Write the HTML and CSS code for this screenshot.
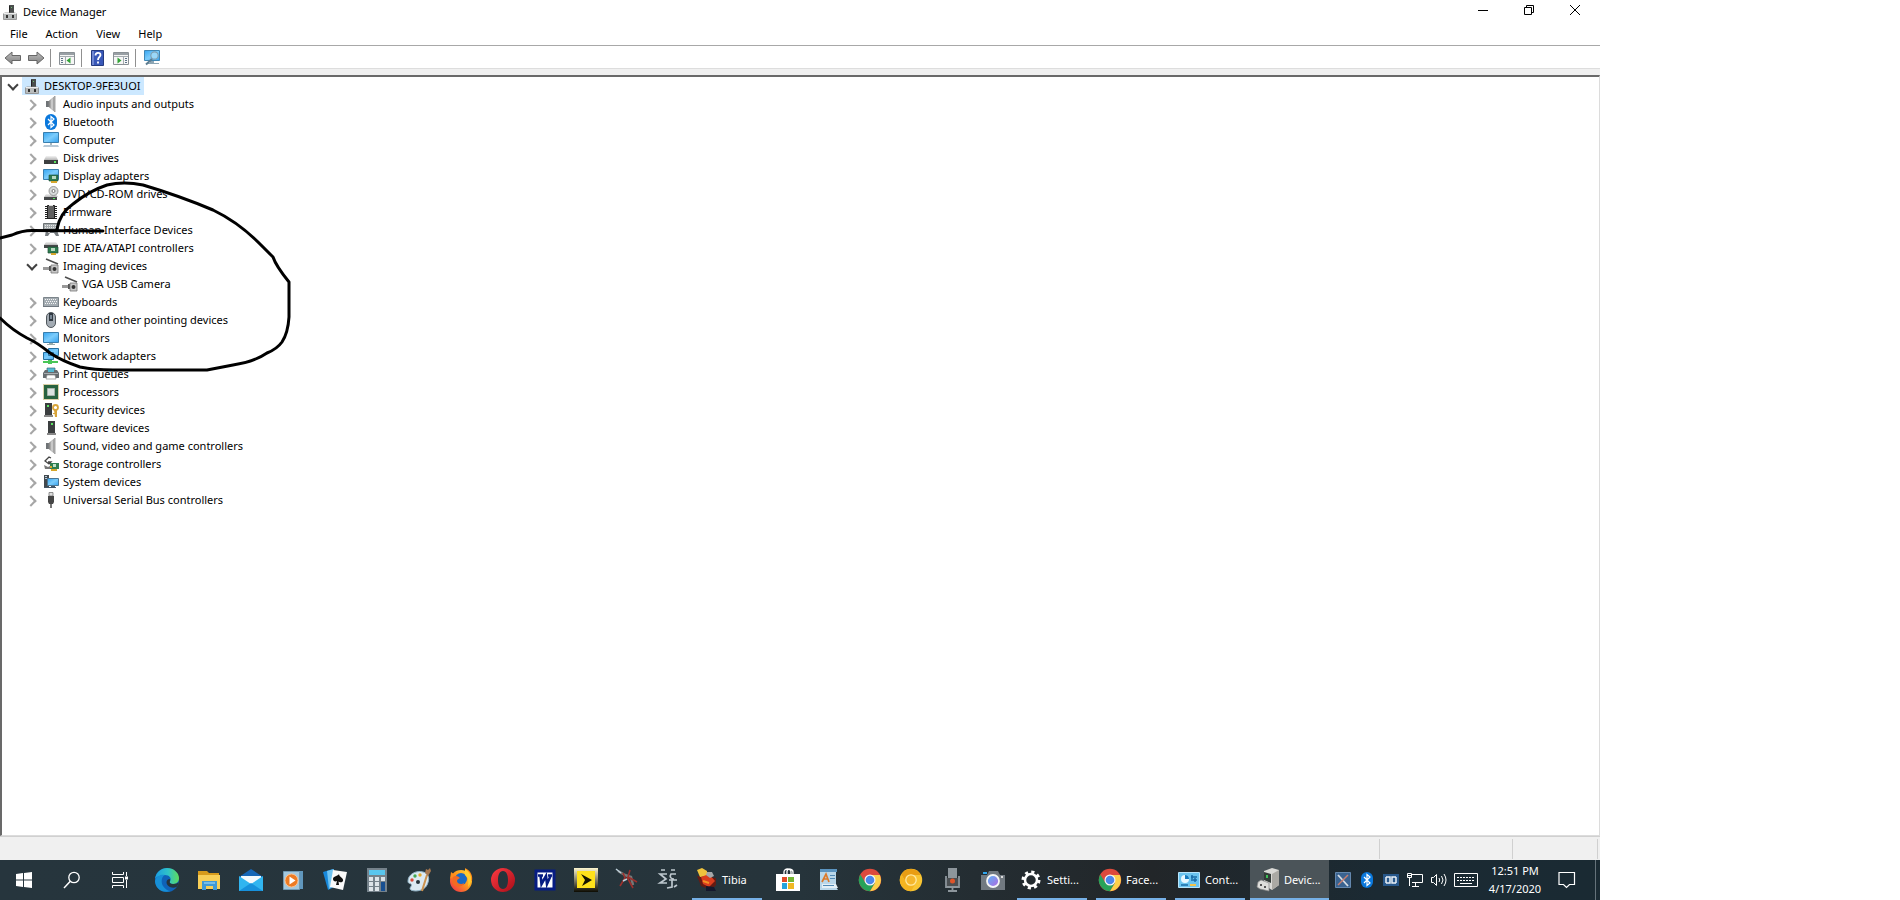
FILE: index.html
```html
<!DOCTYPE html>
<html lang="en">
<head>
<meta charset="utf-8">
<title>Device Manager</title>
<link rel="stylesheet" href="styles.css">
</head>
<body>
<svg class="sprite" aria-hidden="true">
  <defs>
    <linearGradient id="g-screen" x1="0" y1="0" x2="1" y2="1"><stop offset="0" stop-color="#35a5f2"/><stop offset=".5" stop-color="#7cccfb"/><stop offset="1" stop-color="#35a0ee"/></linearGradient>
    <linearGradient id="g-metal" x1="0" x2="1"><stop offset="0" stop-color="#777"/><stop offset=".6" stop-color="#d8d8d8"/><stop offset="1" stop-color="#999"/></linearGradient>
    <linearGradient id="g-disk" x1="0" y1="0" x2="0" y2="1"><stop offset="0" stop-color="#f2f2f2"/><stop offset="1" stop-color="#b5b5b5"/></linearGradient>
    <linearGradient id="g-arrow" x1="0" y1="0" x2="0" y2="1"><stop offset="0" stop-color="#bdbdbd"/><stop offset="1" stop-color="#808080"/></linearGradient>
    <linearGradient id="g-edge" x1="0" y1="0" x2="1" y2="0"><stop offset="0" stop-color="#1b9de2"/><stop offset=".55" stop-color="#2fc3c8"/><stop offset="1" stop-color="#5fdc5a"/></linearGradient>
    <linearGradient id="g-fox" x1="1" y1="0" x2="0" y2="1"><stop offset="0" stop-color="#ffe13a"/><stop offset=".45" stop-color="#ff9a1c"/><stop offset="1" stop-color="#f0244c"/></linearGradient>
    <linearGradient id="g-opera" x1="0" y1="0" x2="1" y2="1"><stop offset="0" stop-color="#ff3b43"/><stop offset="1" stop-color="#a80d18"/></linearGradient>
    <linearGradient id="g-lens" x1="0" y1="0" x2="1" y2="1"><stop offset="0" stop-color="#58b8f5"/><stop offset="1" stop-color="#b564e0"/></linearGradient>
    <linearGradient id="g-gold" x1="0" y1="0" x2="0" y2="1"><stop offset="0" stop-color="#fdf6cf"/><stop offset="1" stop-color="#0c0b02"/></linearGradient>
  </defs>
  <symbol id="pc" viewBox="0 0 14 16"><path fill="#4a4d4d" d="M6 1h5v9H6z"/><path fill="#222" d="M6 2h1v7H6z"/><path fill="#6fbf72" d="M8 3h1v1H8z"/><path fill="#b9bcbc" stroke="#888" stroke-width=".8" d="M1.500 9h11l1 1v5.500H.5V10z"/><path fill="#eee" d="M1 9h12v1H1z"/><path fill="#333" d="M3 11h2v3H3zM9 11h2v3H9z"/></symbol>
  <symbol id="speaker" viewBox="0 0 16 16"><path fill="#6f7376" d="M3 5h3v6H3z"/><path fill="url(#g-metal)" stroke="#999" stroke-width=".5" d="M6 5l5-4v14l-5-4z"/><path fill="#a5a5a5" d="M11 0h1.500v16H11z"/></symbol>
  <symbol id="bt" viewBox="0 0 16 16"><rect x="2" width="12" height="16" rx="6" fill="#0a78dc"/><path fill="none" stroke="#fff" stroke-width="1.200" d="M5 5l6 6-3 2.500v-11L11 5l-6 6"/></symbol>
  <symbol id="monitor" viewBox="0 0 16 16"><path fill="url(#g-screen)" stroke="#3a7fae" d="M.5 2.500h15v10H.5z"/><path fill="#9aa" d="M6 13h4v1H6zM4 14h8v1H4z"/></symbol>
  <symbol id="computer" viewBox="0 0 16 16"><path fill="url(#g-screen)" stroke="#3a7fae" d="M.5.5h15v10H.5z"/><path fill="#a9b6bd" d="M7 11h2v2H7z"/><path fill="#b8c9d6" d="M1 13h14l1 2H0z"/></symbol>
  <symbol id="disk" viewBox="0 0 16 16"><path fill="url(#g-disk)" d="M3 6h10l2 4H1z"/><path fill="#3c3f40" d="M1 10h14v4H1z"/><path fill="#59e35e" d="M11 11h2v2h-2z"/></symbol>
  <symbol id="display" viewBox="0 0 16 16"><path fill="url(#g-screen)" stroke="#3a7fae" d="M.5 1.500h15v10H.5z"/><path fill="#2e7a50" stroke="#1d4f35" stroke-width=".6" d="M6 7h9v6H6z"/><path fill="#b8d8c0" d="M9 8h4v3H9z"/><path fill="#d5a62c" d="M8 13h6v2H8z"/></symbol>
  <symbol id="dvd" viewBox="0 0 16 16"><path fill="url(#g-disk)" d="M3 8h10l2 3H1z"/><circle cx="10.500" cy="5" r="4.500" fill="#d6d9da" stroke="#858585" stroke-width=".8"/><circle cx="10.500" cy="5" r="1.500" fill="#fff" stroke="#777"/><path fill="#454849" d="M1 11h13v3H1z"/><path fill="#59e35e" d="M10 12h2v1h-2z"/></symbol>
  <symbol id="chip" viewBox="0 0 16 16"><path stroke="#222" d="M2 2.500h12M2 4.500h12M2 6.500h12M2 8.500h12M2 10.500h12M2 12.500h12M2 14.500h12"/><path fill="#606060" stroke="#222" d="M4.500 1.500h7v13h-7z"/><path fill="#ddd" d="M6 1h4v1H6z"/></symbol>
  <symbol id="hid" viewBox="0 0 16 16"><path fill="#a5abad" stroke="#6d7375" d="M.5 1.500h15v6H.5z"/><path stroke="#e8e8e8" stroke-dasharray="1 1" d="M2 3.500h12M2 5.500h12"/><path fill="#777c80" d="M3 8h11l2 6h-3l-2-3H7l-2 3H2z"/><path fill="#ddd" d="M5 9h2v2H5zM11 9h1v1h-1z"/></symbol>
  <symbol id="ide" viewBox="0 0 16 16"><path fill="url(#g-disk)" d="M3 2h10l2 3H1z"/><path fill="#454849" d="M1 5h14v3H1z"/><path fill="#2f7e50" stroke="#1d4f35" stroke-width=".7" d="M5 7h10v6H5z"/><path fill="#b8d8c0" d="M8 8h4v3H8z"/><path fill="#d5a62c" d="M8 13h5v2H8z"/></symbol>
  <symbol id="camera" viewBox="0 0 16 16"><path fill="none" stroke="#4d4d4d" stroke-width="1.500" d="M3 1l12 5"/><path fill="#999" d="M0 9h6v3H0z"/><path fill="#555" d="M6 8h2v5H6z"/><path fill="#c8c8c8" stroke="#777" stroke-width=".8" d="M8 7h7v8H8z"/><circle cx="11.500" cy="11" r="2" fill="#333"/></symbol>
  <symbol id="keyboard" viewBox="0 0 16 16"><path fill="#a3abb1" stroke="#7c858b" d="M.5 3.500h15v9H.5z"/><path stroke="#f5f5f5" stroke-dasharray="1 1" d="M2 5.500h12M3 7.500h11M2 9.500h12"/><path fill="#707880" d="M0 12h16v1H0z"/></symbol>
  <symbol id="mouse" viewBox="0 0 16 16"><rect x="3.500" y=".5" width="9" height="15" rx="4.500" fill="#a3abb3" stroke="#50575c"/><path fill="#303941" d="M6 1h4v8H6z"/><path fill="#bdd4e8" d="M7.500 3h1v4h-1z"/></symbol>
  <symbol id="network" viewBox="0 0 16 16"><path fill="url(#g-screen)" stroke="#27709f" d="M5.500.5h10v7h-10zM.5 4.500h10v7H.5z"/><path fill="#49c657" d="M0 13h15v2H0zM5 12h4v4H5z"/></symbol>
  <symbol id="printer" viewBox="0 0 16 16"><path fill="#53b9d3" stroke="#3c6a7a" stroke-width=".7" d="M4 2h8v4H4z"/><path fill="#666c70" d="M2 4h12l2 3v5H0V7z"/><path fill="#a8adb0" d="M1 7h14v1H1z"/><path fill="#53b9d3" d="M5 3h6v3H5z"/><path fill="#fff" stroke="#888" stroke-width=".7" d="M4 9h8l1 4H3z"/></symbol>
  <symbol id="cpu" viewBox="0 0 16 16"><path fill="#29633f" d="M1 1h14v14H1z"/><path fill="none" stroke="#b7a24e" stroke-dasharray="1 1" d="M.5.5h15v15H.5z"/><path fill="#dce3df" stroke="#a6b4ab" d="M4.500 4.500h7v7h-7z"/></symbol>
  <symbol id="security" viewBox="0 0 16 16"><path fill="#3b3e3f" d="M2 1h7v12H2z"/><path fill="#888" d="M1 13h9v2H1z"/><path fill="#5ee562" d="M4 3h2v2H4z"/><circle cx="12.500" cy="5.500" r="2.500" fill="none" stroke="#d9a53a" stroke-width="1.800"/><path fill="#d9a53a" d="M11 8h3v7h-2zM10 11h2v1h-2z"/></symbol>
  <symbol id="software" viewBox="0 0 16 16"><path fill="#3b3e3f" d="M5 1h7v12H5z"/><path fill="#888" d="M4 13h9v2H4z"/><path fill="#5ee562" d="M8 3h2v2H8z"/></symbol>
  <symbol id="storage" viewBox="0 0 16 16"><path fill="none" stroke="#444" stroke-width="1.300" d="M8 2L6 1 2 5l4 3 2-2H5"/><path fill="#777" d="M1 9l4 2 2-1v3H2z"/><path fill="#2f7e50" d="M7 7h9v6H7z"/><path fill="#bfe0c9" d="M10 8h3v3h-3z"/><path fill="#d5a62c" d="M8 13h6v2H8zM7 10h2v2H7z"/></symbol>
  <symbol id="system" viewBox="0 0 16 16"><path fill="#42494e" d="M1 1h5v12H1z"/><path fill="#bcd" d="M2 2h2v1H2zM2 4h2v1H2z"/><path fill="url(#g-screen)" stroke="#4a7694" d="M4.500 4.500h11v7h-11z"/><path fill="#456" d="M8 12h4v1H8zM1 13h12v1H1z"/></symbol>
  <symbol id="usb" viewBox="0 0 16 16"><path fill="#ddd" stroke="#777" stroke-width=".8" d="M6 .5h4V4H6z"/><path fill="#454545" d="M5 4h6v6l-1 2H6l-1-2z"/><path fill="#777" d="M7 12h2v4H7z"/></symbol>
  <symbol id="chrome" viewBox="0 0 24 24"><circle cx="12" cy="12" r="11.200" fill="#dc4a3c"/><path fill="#27a25a" d="M2.300 6.400A11.200 11.200 0 0012 23.200l5-8.500-9.800-.3z"/><path fill="#fcd04a" d="M12 23.200A11.200 11.200 0 0021.800 7H12l5 8z"/><circle cx="12" cy="12" r="5.500" fill="#f5f5f5"/><circle cx="12" cy="12" r="4.300" fill="#4a86ea"/></symbol>
</svg>

<div class="desktop">
  <main class="window">
    <header class="titlebar">
      <svg class="app-icon"><use href="#pc"/></svg>
      <h1 class="title">Device Manager</h1>
      <div class="caption">
        <button class="caption-button" aria-label="Minimize"><svg width="12" height="12"><path d="M1 6.500h10"/></svg></button>
        <button class="caption-button" aria-label="Restore"><svg width="12" height="12"><path d="M1.500 3.500h7v7h-7zM3.500 3V1.500h7v7H9"/></svg></button>
        <button class="caption-button" aria-label="Close"><svg width="12" height="12"><path d="M1 1l10 10M11 1L1 11"/></svg></button>
      </div>
    </header>
    <nav class="menubar">
      <button class="menu">File</button><button class="menu">Action</button><button class="menu">View</button><button class="menu">Help</button>
    </nav>
    <div class="toolbar">
      <button class="tool" aria-label="Back"><svg viewBox="0 0 18 16"><path fill="url(#g-arrow)" stroke="#666" d="M1 8l7-6v3.500h8.500v5H8V14z"/></svg></button>
      <button class="tool" aria-label="Forward"><svg viewBox="0 0 18 16"><path fill="url(#g-arrow)" stroke="#666" d="M17 8l-7-6v3.500H1.500v5H10V14z"/></svg></button>
      <span class="divider"></span>
      <button class="tool" aria-label="Show console tree"><svg viewBox="0 0 18 16"><path fill="#f6f6f6" stroke="#8a9095" d="M1.500 2.500h15v12h-15z"/><path fill="#99a0a5" d="M2 3h14v2H2z"/><path stroke="#a5abb0" d="M2 6.500h14M7.500 7v7"/><path stroke="#5c7387" stroke-dasharray="2 1" d="M3 8.500h3M3 10.500h3M3 12.500h3"/><path fill="#32a336" d="M12.500 7.500v6l-4-3z"/></svg></button>
      <span class="divider"></span>
      <button class="tool" aria-label="Help"><svg viewBox="0 0 18 16"><path fill="#3857b8" stroke="#243a80" d="M2.500.5h12v15h-12z"/><path fill="#6f87d2" d="M3 1h2v14H3z"/><path fill="none" stroke="#fff" stroke-width="1.800" d="M6.500 5.500C6.500 2 11.500 2 11.500 5c0 2-2.500 2-2.500 5M9 11.500v2"/></svg></button>
      <button class="tool" aria-label="Show action pane"><svg viewBox="0 0 18 16"><path fill="#f6f6f6" stroke="#8a9095" d="M1.500 2.500h15v12h-15z"/><path fill="#99a0a5" d="M2 3h14v2H2z"/><path stroke="#a5abb0" d="M2 6.500h14M11.500 7v7"/><path stroke="#5c7387" stroke-dasharray="2 1" d="M13 8.500h3M13 10.500h3M13 12.500h3"/><path fill="#32a336" d="M5.500 7.500v6l4-3z"/></svg></button>
      <span class="divider"></span>
      <button class="tool" aria-label="Scan for hardware changes"><svg viewBox="0 0 18 16"><path fill="url(#g-screen)" stroke="#3f87b5" d="M1.500.5h15v10h-15z"/><path fill="#8da6b5" d="M7 11h4v2H7zM3 13h13v1H3z"/><circle cx="11.500" cy="5.500" r="3.700" fill="#9ad8f9" stroke="#80a0b2" stroke-width="1.200"/><path stroke="#5d7c90" stroke-width="2" d="M9 9l-6 5.500"/></svg></button>
    </div>
    <section class="pane">
      <div class="row root">
        <button class="toggle open" aria-label="Collapse computer"></button>
        <span class="selected"><svg class="app-icon"><use href="#pc"/></svg>DESKTOP-9FE3UOI</span>
      </div>
      <ul class="tree">
        <li class="row"><button class="toggle" aria-label="Expand"></button><svg class="icon"><use href="#speaker"/></svg>Audio inputs and outputs</li>
        <li class="row"><button class="toggle" aria-label="Expand"></button><svg class="icon"><use href="#bt"/></svg>Bluetooth</li>
        <li class="row"><button class="toggle" aria-label="Expand"></button><svg class="icon"><use href="#computer"/></svg>Computer</li>
        <li class="row"><button class="toggle" aria-label="Expand"></button><svg class="icon"><use href="#disk"/></svg>Disk drives</li>
        <li class="row"><button class="toggle" aria-label="Expand"></button><svg class="icon"><use href="#display"/></svg>Display adapters</li>
        <li class="row"><button class="toggle" aria-label="Expand"></button><svg class="icon"><use href="#dvd"/></svg>DVD/CD-ROM drives</li>
        <li class="row"><button class="toggle" aria-label="Expand"></button><svg class="icon"><use href="#chip"/></svg>Firmware</li>
        <li class="row"><button class="toggle" aria-label="Expand"></button><svg class="icon"><use href="#hid"/></svg>Human Interface Devices</li>
        <li class="row"><button class="toggle" aria-label="Expand"></button><svg class="icon"><use href="#ide"/></svg>IDE ATA/ATAPI controllers</li>
        <li class="row"><button class="toggle open" aria-label="Collapse"></button><svg class="icon"><use href="#camera"/></svg>Imaging devices</li>
        <li class="row child"><svg class="icon"><use href="#camera"/></svg>VGA USB Camera</li>
        <li class="row"><button class="toggle" aria-label="Expand"></button><svg class="icon"><use href="#keyboard"/></svg>Keyboards</li>
        <li class="row"><button class="toggle" aria-label="Expand"></button><svg class="icon"><use href="#mouse"/></svg>Mice and other pointing devices</li>
        <li class="row"><button class="toggle" aria-label="Expand"></button><svg class="icon"><use href="#monitor"/></svg>Monitors</li>
        <li class="row"><button class="toggle" aria-label="Expand"></button><svg class="icon"><use href="#network"/></svg>Network adapters</li>
        <li class="row"><button class="toggle" aria-label="Expand"></button><svg class="icon"><use href="#printer"/></svg>Print queues</li>
        <li class="row"><button class="toggle" aria-label="Expand"></button><svg class="icon"><use href="#cpu"/></svg>Processors</li>
        <li class="row"><button class="toggle" aria-label="Expand"></button><svg class="icon"><use href="#security"/></svg>Security devices</li>
        <li class="row"><button class="toggle" aria-label="Expand"></button><svg class="icon"><use href="#software"/></svg>Software devices</li>
        <li class="row"><button class="toggle" aria-label="Expand"></button><svg class="icon"><use href="#speaker"/></svg>Sound, video and game controllers</li>
        <li class="row"><button class="toggle" aria-label="Expand"></button><svg class="icon"><use href="#storage"/></svg>Storage controllers</li>
        <li class="row"><button class="toggle" aria-label="Expand"></button><svg class="icon"><use href="#system"/></svg>System devices</li>
        <li class="row"><button class="toggle" aria-label="Expand"></button><svg class="icon"><use href="#usb"/></svg>Universal Serial Bus controllers</li>
      </ul>
    </section>
    <footer class="statusbar"><span class="status-main"></span><span class="status-mid"></span><span class="status-end"></span></footer>
    <svg class="scribble" width="300" height="380" aria-hidden="true"><path d="M0 238L12 235Q22 230.500 32 230.500L103 231M57 229Q60 213 73 204Q89 191 107 185Q124 181 143 185Q180 196 213 210Q240 223 263 247L273 257Q276 266 289 282V317Q288 333 282 342Q277 349 267 353Q254 362 233 365L207 370H113Q94 370 80 367Q62 361 50 353Q38 343 27 338Q12 330 0 318"/></svg>
  </main>

  <footer class="taskbar">
    <div class="system-buttons">
      <button class="task" aria-label="Start"><svg width="16" height="16" viewBox="0 0 16 16"><path fill="#fff" d="M0 2l7-1v6.500H0zM8 1l8-1v7.500H8zM0 8.500h7V15l-7-1zM8 8.500h8V16l-8-1z"/></svg></button>
      <button class="task" aria-label="Search"><svg width="18" height="18" viewBox="0 0 18 18"><circle cx="11" cy="6.500" r="5.200" fill="none" stroke="#fff" stroke-width="1.300"/><path stroke="#fff" stroke-width="1.500" d="M7.300 10.300L1 17"/></svg></button>
      <button class="task" aria-label="Task View"><svg width="18" height="16" viewBox="0 0 18 16"><path fill="none" stroke="#fff" d="M1.500 0v2.500h11V0M1.500 5.500h11v5h-11zM1.500 16v-2.500h11V16M15.500 0v4M15.500 8v8"/><path fill="#fff" d="M14 4.500h3v3h-3z"/></svg></button>
    </div>
    <div class="pinned">
      <button class="task" aria-label="Microsoft Edge"><svg viewBox="0 0 24 24"><circle cx="12" cy="12" r="12" fill="#0f62b8"/><path fill="url(#g-edge)" d="M0 11C1 4 6 0 12 0c7 0 12 5 12 10 0 4-3 6-6 6-3 0-4-1.500-3-3 2-3-1-6-5-6S1 9 0 11z"/><path fill="#178fd6" d="M0 13C1 8 6 6 10 7 6 9 6 15 8 18c2 3 5 5 8 5C7 26 0 20 0 13z"/><path fill="#26343c" d="M15 13c-1 1.500 0 3 3 3s5-1 5.500-2c.5 2-1 4-2 5-5 2-10-1-10-5 0-2 2-3 3-3 .6 0 1 1 .5 2z"/></svg></button>
      <button class="task" aria-label="File Explorer"><svg viewBox="0 0 24 24"><path fill="#d79b1c" d="M1 3h9l2 2h10v5H1z"/><path fill="#f8cf57" d="M1 7h22v14H1z"/><path fill="#3f99d6" d="M5 13h15v9h-4v-4H9v4H5z"/><path fill="#76bde9" d="M7 14h11v2H7z"/></svg></button>
      <button class="task" aria-label="Mail"><svg viewBox="0 0 24 24"><path fill="#1666b6" d="M0 9l12-8 12 8v6H0z"/><path fill="#f4f9fc" d="M2 8h20v6l-10 5L2 14z"/><path fill="#31b5f0" d="M0 8l12 8 12-8v15H0z"/><path fill="#1791dc" d="M0 23l12-8 12 8z"/></svg></button>
      <button class="task" aria-label="Media Player"><svg viewBox="0 0 24 24"><path fill="#6097bd" d="M6 3h16v18H6z"/><path fill="#a4c8de" stroke="#729ab4" d="M2.500 3.500h16v18h-16z"/><circle cx="10.500" cy="12.500" r="6.500" fill="#ed7b24" stroke="#ffc08a"/><path fill="#fff" d="M8.500 8.500v8l6-4z"/></svg></button>
      <button class="task" aria-label="Solitaire"><svg viewBox="0 0 24 24"><path fill="#1788db" d="M0 4l10-3 3 17-8 4z"/><path fill="#72c4f2" d="M4 3l7-2-2 18-3 2z"/><path fill="#fafafa" d="M10 2l14 2-4 18-13-3z"/><path fill="#111" d="M16 6c0 3 5 4 4 7-1 2-4 1-4.500.5L16 17h-3l1-4c-2 1-4 0-4-2 0-3 5-3 6-5z"/></svg></button>
      <button class="task" aria-label="Calculator"><svg viewBox="0 0 24 24"><path fill="#75828b" d="M2 0h20v24H2z"/><path fill="#59c6ee" d="M4 2h16v5H4z"/><path fill="#dde4e9" d="M4 9h4v4H4zM10 9h4v4h-4zM16 9h4v4h-4zM4 14h4v4H4zM10 14h4v4h-4zM4 19h4v4H4zM10 19h4v4h-4z"/><path fill="#174f91" d="M16 14h4v9h-4z"/></svg></button>
      <button class="task" aria-label="Paint"><svg viewBox="0 0 24 24"><path fill="#dceaf2" stroke="#94b6c9" d="M1 13C1 6 10 2 16 4c6 1 7 7 4 13-3 6-12 7-16 5-3-2 2-4 0-6-1-1-3 0-3-3z"/><circle cx="5" cy="12" r="1.700" fill="#d84d3c"/><circle cx="8" cy="8" r="1.700" fill="#43a852"/><circle cx="13" cy="7" r="1.700" fill="#e5a92c"/><circle cx="11" cy="14" r="2" fill="#26343c"/><path stroke="#cc9350" stroke-width="2" d="M15 23l5-16"/><path fill="#a77850" d="M18 5l1-4 2 1 2-2 1 3-3 5z"/></svg></button>
      <button class="task" aria-label="Firefox"><svg viewBox="0 0 24 24"><circle cx="12" cy="13" r="11" fill="url(#g-fox)"/><path fill="#ff8c1a" d="M1 11L2 4l4 3zM16 0c6 3 8 8 7 13l-6-2z"/><circle cx="12" cy="11" r="6" fill="#196ac4"/><path fill="#f36a22" d="M4 9c3-2 5-1 7 1-1 1-3 1-3 3 0 3 5 4 7 2 0 4-10 6-12-1z"/><path fill="#ffcc2e" d="M16 1c7 4 8 12 3 18 1-6 0-9-3-12z"/></svg></button>
      <button class="task" aria-label="Opera"><svg viewBox="0 0 24 24"><path fill="url(#g-opera)" fill-rule="evenodd" d="M12 0a12 12 0 100 24 12 12 0 000-24zm0 3c3.500 0 5 4 5 9s-1.500 9-5 9-5-4-5-9 1.500-9 5-9z"/></svg></button>
      <button class="task" aria-label="Word"><svg viewBox="0 0 24 24"><path fill="#fff" stroke="#071c83" stroke-width="3" d="M3 3h18v18H3z"/><path fill="none" stroke="#071c83" stroke-width="2.600" d="M5 7.500h5M7.500 7l1 9L13 8l1 8 4-9M15 7.500h4"/></svg></button>
      <button class="task" aria-label="Player"><svg viewBox="0 0 24 24"><path fill="url(#g-gold)" d="M0 0h24v24H0z"/><path fill="#ffe21b" d="M3 3h18v17H3z"/><path fill="#151400" d="M7 6l11 6-10 6 3-6z"/></svg></button>
      <button class="task" aria-label="Strategy game"><svg viewBox="0 0 24 24"><path fill="none" stroke="#777" stroke-width="2.500" d="M3 3l7 4 6 2 2 8"/><path fill="none" stroke="#9c302d" stroke-width="1.600" d="M8 5l2 5-5 8M15 2l-2 7 9 5M12 9l6 11"/><path stroke="#bed1db" stroke-width="1.500" d="M1 1l5 4M12 11l-4 2"/></svg></button>
      <button class="task" aria-label="Stronghold"><svg viewBox="0 0 24 24"><path fill="none" stroke="#bdc7ce" stroke-width="1.700" d="M11 6H4l6 5-6 4h7M20 6h-5c-2 3 0 5 3 5M13 12h8M16 12v7l-5 1M5 2h4M15 2h4M18 19l3-2"/></svg></button>
    </div>
    <button class="task running"><svg viewBox="0 0 24 24"><path fill="#651b13" d="M3 8l7 1 12 1v7l-5 5-10-4z"/><path fill="#f0c43d" d="M3 2l5-2 5 3v5L6 9z"/><path fill="#db3d1d" d="M7 9l8-3 6 7-6 6-6-3z"/><path fill="#a6a8a9" d="M13 4h5l2 4-4 2-4-3z"/><path fill="#15182d" d="M12 18l8 1 2 4H12z"/><path stroke="#f59024" stroke-width="2" d="M9 13l6 2"/></svg><span>Tibia</span></button>
    <div class="pinned short">
      <button class="task" aria-label="Microsoft Store"><svg viewBox="0 0 24 24"><path fill="none" stroke="#fff" stroke-width="1.300" d="M8 7V4c0-4 7-4 7 0v3M11 7V3c1-3 6-2 6 1v3"/><path fill="#fff" d="M0 6h24v17H0z"/><path fill="#e24b28" d="M6 9h5v5H6z"/><path fill="#75b633" d="M12 9h6v5h-6z"/><path fill="#24a3df" d="M6 15h5v6H6z"/><path fill="#efb724" d="M12 15h6v6h-6z"/></svg></button>
      <button class="task" aria-label="WordPad"><svg viewBox="0 0 24 24"><path fill="#b9d7ea" d="M3 1h16v18l2 3H3z"/><path fill="#5b94c0" d="M3 1h17v3H3z"/><path fill="#e4f0f7" d="M5 16h14l2 4H5z"/><path fill="none" stroke="#dc7929" stroke-width="1.700" d="M5 14l4-8 3 8M6 11h5"/><path stroke="#5089b5" d="M13 7.500h5M13 10.500h5M6 17.500h11"/></svg></button>
      <button class="task" aria-label="Google Chrome"><svg><use href="#chrome"/></svg></button>
      <button class="task" aria-label="Chrome Canary"><svg viewBox="0 0 24 24"><circle cx="12" cy="12" r="11.200" fill="#f9c533"/><path fill="#e99d13" d="M2.300 6.400A11.200 11.200 0 0121.800 7H12l-5 7z"/><path fill="#f4b420" d="M2.300 6.400A11.200 11.200 0 0012 23.200l5-8.500-10-.3z"/><circle cx="12" cy="12" r="5.200" fill="#f5b62d" stroke="#ffe9a1" stroke-width="1.300"/></svg></button>
      <button class="task" aria-label="Voice Recorder"><svg viewBox="0 0 24 24"><path fill="#8d969c" d="M8 0h9v10H8z"/><path fill="#4b4f52" d="M7 10h11v9H7z"/><path fill="none" stroke="#8d969c" stroke-width="1.800" d="M6 8v11h13V8M12.500 19v4M8 23h9"/><circle cx="12.500" cy="13" r="2.500" fill="#df552a"/></svg></button>
      <button class="task" aria-label="Camera"><svg viewBox="0 0 24 24"><path fill="#717980" d="M0 7h6l2-4h9l2 4h5v15H0z"/><path fill="#30a6ed" d="M2 4h4v2H2z"/><circle cx="12" cy="13" r="6" fill="url(#g-lens)" stroke="#f6f6f6" stroke-width="1.800"/><path fill="#ddd" d="M20 8h2v2h-2z"/></svg></button>
    </div>
    <button class="task running"><svg viewBox="0 0 24 24"><circle cx="12" cy="12" r="6" fill="none" stroke="#fff" stroke-width="2.500"/><circle cx="12" cy="12" r="8" fill="none" stroke="#fff" stroke-width="3" stroke-dasharray="3.140 3.140"/></svg><span>Setti...</span></button>
    <button class="task running"><svg><use href="#chrome"/></svg><span>Face...</span></button>
    <button class="task running"><svg viewBox="0 0 24 24"><path fill="#6bc4ef" stroke="#b9e5fb" d="M1.500 4.500h21v15h-21z"/><circle cx="8" cy="11" r="4" fill="#e7f8ff"/><path fill="#167cc0" d="M8 11V7a4 4 0 014 4z"/><path stroke="#1b6ca8" stroke-width="1.500" d="M14 9h6M14 12h6M15 7v4M18 10v4M4 17h7"/><path stroke="#f4c44a" stroke-width="2" d="M13 17h6"/></svg><span>Cont...</span></button>
    <button class="task running active"><svg viewBox="0 0 24 24"><path fill="#d9d9d6" d="M8 3l8-3 7 2v15l-7 5-8-5z"/><path fill="#333b38" d="M8 4l7 2v9l-7-3z"/><path fill="#3dbf57" d="M10 7h2v3h-2z"/><path fill="#aaa9a4" d="M16 6l7-4v15l-7 5z"/><path fill="#dededb" stroke="#888" stroke-width=".7" d="M2 14l3-2 8 3v8l-9-2-3-2z"/><path fill="#555" d="M4 16h2v2H4zM8 18h2v2H8z"/></svg><span>Devic...</span></button>
    <div class="tray">
      <button class="tray-button" aria-label="Tools"><svg viewBox="0 0 16 16"><path fill="#3a6390" stroke="#6488ae" d="M.5.500h15v15H.500z"/><path stroke="#d6dde4" stroke-width="1.800" d="M3 3l10 11"/><path stroke="#c97f6e" stroke-width="1.500" d="M3 13L13 3"/></svg></button>
      <button class="tray-button" aria-label="Bluetooth"><svg><use href="#bt"/></svg></button>
      <button class="tray-button" aria-label="Display settings"><svg viewBox="0 0 16 16"><path fill="#27578a" d="M0 2h16v12H0z"/><path fill="none" stroke="#e9f0f6" stroke-width="1.500" d="M3 5h4v6H3M13 5H9v6h4M3 5v6M13 5v6"/></svg></button>
      <button class="tray-button" aria-label="Network"><svg viewBox="0 0 16 16"><path fill="none" stroke="#fff" d="M5 2.500h10.500v8H5M.5 1.500h4v4h-4zM2.500 6v8M8.500 11v3M5 14.500h7M1 3.500h3"/></svg></button>
      <button class="tray-button" aria-label="Volume"><svg viewBox="0 0 16 16"><path fill="none" stroke="#fff" d="M.5 5.500h2l3-3v11l-3-3h-2zM8 6q1.500 2 0 4M10.500 4q3 4 0 8M13 2q4 6 0 12"/></svg></button>
      <button class="tray-button wide" aria-label="Touch keyboard"><svg viewBox="0 0 24 14"><path fill="none" stroke="#fff" d="M.5.500h23v13H.500z"/><path stroke="#fff" stroke-dasharray="2 1" d="M3 4.500h18M3 7.500h18"/><path stroke="#fff" d="M6 10.500h12"/></svg></button>
      <button class="clock"><time>12:51 PM</time><time>4/17/2020</time></button>
      <button class="action-center" aria-label="Notifications"><svg width="18" height="18" viewBox="0 0 18 18"><path fill="none" stroke="#fff" stroke-width="1.200" d="M1 1.500h15.500v12h-5L8.500 16.500l-3-3H1z"/></svg></button>
      <button class="show-desktop" aria-label="Show desktop"></button>
    </div>
  </footer>
</div>
</body>
</html>
```
FILE: styles.css
```css
* { box-sizing: border-box; }
body { margin: 0; background: #fff; color: #000; font: 11px/18px "Noto Sans", "Open Sans", sans-serif; }
button { margin: 0; padding: 0; border: 0; background: none; color: inherit; font: inherit; }
svg { display: block; flex: none; }
.sprite { position: absolute; width: 0; height: 0; }

.desktop { display: flex; flex-direction: column; width: 84.21%; min-height: 100vh; }
.window { position: relative; flex: 1; display: flex; flex-direction: column; background: #fff; }

.titlebar { display: flex; align-items: center; height: 23px; padding-left: 3px; }
.app-icon { width: 14px; height: 16px; }
.title { margin: 0 0 0 6px; font-size: 11px; font-weight: 400; }
.caption { display: flex; align-self: flex-start; margin-left: auto; padding-right: 2px; }
.caption-button { display: flex; align-items: center; justify-content: center; width: 46px; height: 20px; }
.caption-button path { fill: none; stroke: #000; }

.menubar { display: flex; gap: 18px; height: 23px; padding: 2px 10px; border-bottom: 1px solid #a8a8a8; }
.toolbar { display: flex; align-items: center; gap: 5px; height: 23px; padding: 2px 0 0 4px; border-bottom: 1px solid #ddd; }
.tool svg { width: 18px; height: 16px; }
.divider { width: 1px; height: 18px; margin-right: 2px; background: #909090; }

.window { background: #f0f0f0; }
.titlebar, .menubar, .toolbar, .pane { background: #fff; }
.pane { flex: 1; margin-top: 6px; border: solid; border-width: 2px 1px 1px 2px; border-color: #696969 #dcdcdc #dcdcdc #696969; }
.row { display: flex; align-items: center; height: 18px; white-space: nowrap; }
.root { padding-left: 5px; }
.selected { display: flex; align-items: center; gap: 5px; height: 18px; margin-left: 5px; padding: 0 4px 0 3px; background: #cce8ff; }
.tree { margin: 0; padding: 0 0 0 24px; list-style: none; }
.tree .icon { width: 16px; height: 16px; margin: 0 4px 0 7px; }
.tree .child { padding-left: 29px; }
.toggle { display: flex; align-items: center; width: 10px; height: 18px; padding: 2px 0 0 1px; }
.toggle::before { content: ""; width: 6px; height: 6px; border: solid #a6a6a6; border-width: 2px 2px 0 0; transform: rotate(45deg); }
.toggle.open { padding: 0 0 2px 2px; }
.toggle.open::before { border-color: #404040; transform: rotate(135deg); }

.statusbar { display: flex; height: 24px; padding: 2px 2px 1px 0; border-top: 1px solid #d0d0d0; }
.statusbar span { border-right: 1px solid #d0d0d0; }
.status-main { flex: 1; }
.status-mid { width: 133px; }
.status-end { width: 85px; }

.scribble { position: absolute; left: 0; top: 0; pointer-events: none; }
.scribble path { fill: none; stroke: #000; stroke-width: 3; stroke-linejoin: round; stroke-linecap: round; }

.taskbar { display: flex; height: 40px; color: #fff; background: linear-gradient(90deg, #26353d 0%, #26343b 50%, #222629 72%, #1b2a33 86%, #1a2a33 100%); }
.system-buttons { display: flex; width: 146px; }
.system-buttons .task { width: 48px; }
.task { display: flex; align-items: center; justify-content: center; height: 40px; }
.pinned { display: grid; grid-template-columns: repeat(9, 42px) repeat(4, 41px); }
.pinned.short { grid-template-columns: repeat(6, 41px); }
.pinned svg, .running svg { width: 24px; height: 24px; }
.running { position: relative; justify-content: flex-start; gap: 4px; width: 79px; padding-left: 6px; white-space: nowrap; }
.running::after { content: ""; position: absolute; left: 4px; right: 5px; bottom: 0; height: 2px; background: #76b0e6; }
.running.active { background: #4b5459; }
.running.active::after { left: 0; right: 0; }
.tray { display: flex; align-items: center; margin-left: auto; }
.tray-button { display: flex; align-items: center; justify-content: center; width: 24px; height: 40px; }
.tray-button svg { width: 16px; height: 16px; }
.tray-button.wide { width: 30px; }
.tray-button.wide svg { width: 24px; height: 14px; }
.clock { display: flex; flex-direction: column; align-items: center; width: 68px; }
.action-center { display: flex; justify-content: center; width: 36px; margin-right: 10px; }
.show-desktop { width: 5px; height: 40px; border-left: 1px solid #65727a; }
```
